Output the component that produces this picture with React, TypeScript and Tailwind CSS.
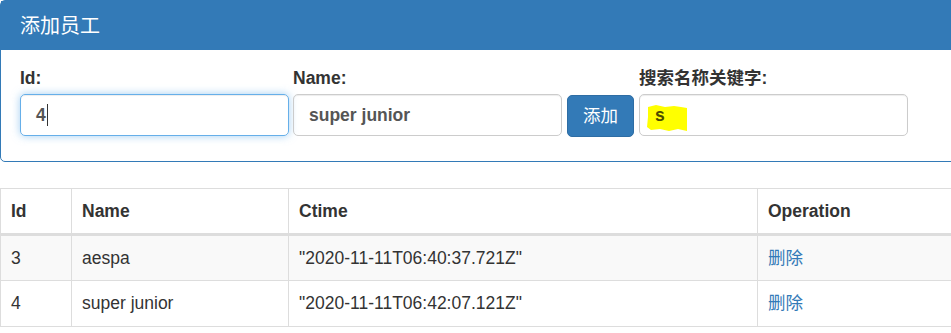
const font = "font-['Liberation_Sans','Noto_Sans_CJK_SC',sans-serif]"

const rows = [
  { id: 3, name: "aespa", ctime: '"2020-11-11T06:40:37.721Z"' },
  { id: 4, name: "super junior", ctime: '"2020-11-11T06:42:07.121Z"' },
]

function Field({ label, value, focused }: { label: string; value: string; focused?: boolean }) {
  return (
    <label className="flex w-[269px] flex-col text-[17.5px] font-bold text-[#333]">
      <span className="mb-[3px] leading-[25px]">{label}</span>
      <div
        className={
          focused
            ? "flex h-[42px] items-center rounded-[5px] border border-[#66afe9] px-[15px] text-[#555] shadow-[inset_0_1px_1px_rgba(0,0,0,.075),0_0_8px_rgba(102,175,233,.6)]"
            : "flex h-[42px] items-center rounded-[5px] border border-[#ccc] px-[15px] text-[#555] shadow-[inset_0_1px_1px_rgba(0,0,0,.075)]"
        }
      >
        {value}
        {focused && <span className="ml-px h-[22px] w-px bg-[#333]" />}
      </div>
    </label>
  )
}

export default function App() {
  return (
    <div className={`h-[333px] w-[951px] overflow-hidden bg-white ${font}`}>
      <div className="w-[970px] rounded-[5px] border border-[#337ab7]">
        <div className="flex h-[49px] items-center bg-[#337ab7] px-[19px] text-[20px] text-white">添加员工</div>
        <div className="flex items-end gap-[4px] px-[19px] pt-[16px] pb-[25px]">
          <Field label="Id:" value="4" focused />
          <Field label="Name:" value="super junior" />
          <button className="mb-[-1px] ml-px h-[42px] w-[67px] rounded-[5px] border border-[#2e6da4] bg-[#337ab7] text-[17.5px] text-white">
            添加
          </button>
          <label className="ml-px flex w-[269px] flex-col text-[17.5px] font-bold text-[#333]">
            <span className="mb-[3px] leading-[25px]">搜索名称关键字:</span>
            <div className="relative flex h-[42px] items-center rounded-[5px] border border-[#ccc] px-[15px] text-[#555] shadow-[inset_0_1px_1px_rgba(0,0,0,.075)]">
              <svg className="absolute left-[7px] top-[10px]" width="41" height="27" viewBox="0 0 41 27">
                <polygon points="1,2 9,0 18,2 27,1 34,2 40,3 40,26 31,24 22,26 13,24 4,25 0,22 1,12" fill="#ffff00" />
              </svg>
              <span className="relative text-[#4b4b00]">s</span>
            </div>
          </label>
        </div>
      </div>

      <table className="mt-[26px] w-[970px] border-collapse border border-[#ddd] text-[17.5px] text-[#333]">
        <thead>
          <tr className="h-[46px]">
            <th className="w-[71px] border border-b-[3px] border-[#ddd] px-[10px] text-left font-bold">Id</th>
            <th className="w-[217px] border border-b-[3px] border-[#ddd] px-[10px] text-left font-bold">Name</th>
            <th className="w-[469px] border border-b-[3px] border-[#ddd] px-[10px] text-left font-bold">Ctime</th>
            <th className="border border-b-[3px] border-[#ddd] px-[10px] text-left font-bold">Operation</th>
          </tr>
        </thead>
        <tbody>
          {rows.map((r, i) => (
            <tr key={r.id} className={i % 2 === 0 ? "h-[46px] bg-[#f9f9f9]" : "h-[46px]"}>
              <td className="border border-[#ddd] px-[10px]">{r.id}</td>
              <td className="border border-[#ddd] px-[10px]">{r.name}</td>
              <td className="border border-[#ddd] px-[10px]">{r.ctime}</td>
              <td className="border border-[#ddd] px-[10px] text-[#337ab7]">删除</td>
            </tr>
          ))}
        </tbody>
      </table>
    </div>
  )
}
